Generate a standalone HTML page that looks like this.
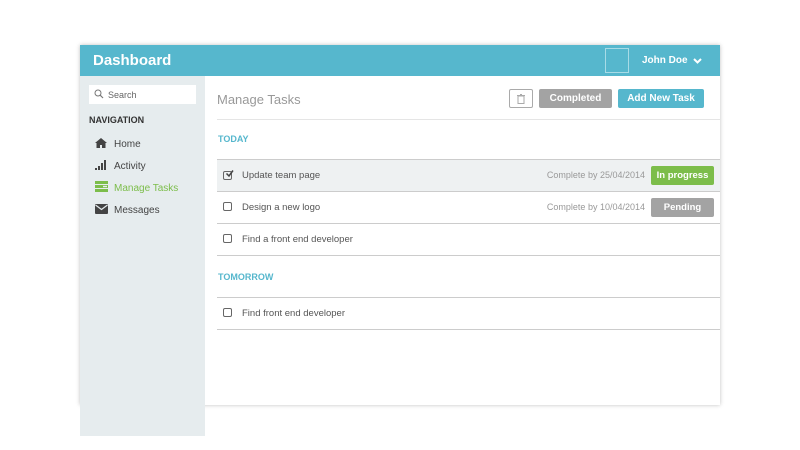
<!DOCTYPE html>
<html><head><meta charset="utf-8"><style>
*{margin:0;padding:0;box-sizing:border-box}
body{width:800px;height:450px;background:#fff;font-family:"Liberation Sans",sans-serif;position:relative;overflow:hidden}
.card{position:absolute;left:80px;top:45px;width:640px;height:360px;background:#fff;box-shadow:0 0 4px rgba(0,0,0,.25)}
.hdr{position:absolute;left:80px;top:45px;width:640px;height:31px;background:#56b7cd}
.hdr .t{position:absolute;left:13px;top:7px;color:#fff;font-weight:bold;font-size:15px}
.av{position:absolute;left:525px;top:3px;width:24px;height:25px;border:1px solid #8fcfdd}
.jd{position:absolute;left:562px;top:10px;color:#fff;font-size:10px;font-weight:bold}
.side{position:absolute;left:80px;top:76px;width:125px;height:360px;background:#e6ecee}
.search{position:absolute;left:9px;top:9px;width:107px;height:19px;background:#fff;font-size:9px;color:#666;padding:5px 0 0 19px}
.nav{position:absolute;left:9px;top:39px;font-size:9px;font-weight:bold;color:#333}
.ni{position:absolute;left:34px;font-size:10px;color:#444}
.ic{position:absolute;left:15px}
.mt{position:absolute;left:217px;top:92px;font-size:13px;color:#999}
.btn{position:absolute;top:89px;height:19px;font-size:10px;font-weight:bold;color:#fff;text-align:center;line-height:19px;border-radius:2px}
.line{position:absolute;left:217px;width:503px;height:1px;background:#ccc}
.sec{position:absolute;left:218px;font-size:9px;font-weight:bold;color:#56b7cd}
.row{position:absolute;left:242px;font-size:9.5px;color:#555}
.cb{position:absolute;left:223px;width:9px;height:9px;border:1px solid #666;border-radius:2px}
.date{position:absolute;right:155px;font-size:9px;color:#999;white-space:nowrap}
.badge{position:absolute;left:651px;width:63px;height:19px;line-height:19px;text-align:center;color:#fff;font-size:9.5px;font-weight:bold;border-radius:2px}
</style></head><body>
<div class="card"></div>
<div class="side">
 <div class="search">Search<svg style="position:absolute;left:5px;top:4px" width="10" height="10" viewBox="0 0 10 10"><circle cx="4" cy="4" r="3" fill="none" stroke="#777" stroke-width="1"/><path d="M6.2 6.2L9 9" stroke="#777" stroke-width="1.2"/></svg></div>
 <div class="nav">NAVIGATION</div>
</div>
<svg class="ic" style="left:95px;top:138px" width="12" height="10" viewBox="0 0 12 10"><path d="M6 0L0 5h1.5v5h3.5V7h2v3h3.5V5H12z" fill="#444"/></svg>
<div class="ni" style="left:114px;top:139px">Home</div>
<svg class="ic" style="left:95px;top:159px" width="13" height="11" viewBox="0 0 13 11"><rect x="0" y="9" width="2" height="2" fill="#444"/><rect x="3" y="7" width="2" height="4" fill="#444"/><rect x="6" y="4" width="2" height="7" fill="#444"/><rect x="9" y="1" width="2" height="10" fill="#444"/></svg>
<div class="ni" style="left:114px;top:161px">Activity</div>
<svg class="ic" style="left:95px;top:181px" width="13" height="11" viewBox="0 0 13 11"><rect x="0" y="0" width="13" height="3" fill="#7cbd4a"/><rect x="0" y="4" width="13" height="3" fill="#7cbd4a"/><rect x="0" y="8" width="13" height="3" fill="#7cbd4a"/><rect x="8" y="4.8" width="4" height="1.4" fill="#e6ecee"/></svg>
<div class="ni" style="left:114px;top:183px;color:#7cbd4a">Manage Tasks</div>
<svg class="ic" style="left:95px;top:204px" width="13" height="10" viewBox="0 0 13 10"><rect width="13" height="10" rx="1" fill="#444"/><path d="M0.5 1L6.5 5.5L12.5 1" stroke="#e6ecee" stroke-width="1.2" fill="none"/></svg>
<div class="ni" style="left:114px;top:205px">Messages</div>
<div class="hdr"><div class="t">Dashboard</div><div class="av" style="border-color:#a8dbe6"></div><div class="jd">John Doe</div>
<svg style="position:absolute;left:613px;top:13px" width="9" height="6" viewBox="0 0 9 6"><path d="M1 1l3.5 3.5L8 1" stroke="#fff" stroke-width="2" fill="none"/></svg></div>
<div class="mt">Manage Tasks</div>
<div class="btn" style="left:509px;width:24px;border:1px solid #aaa;background:#fff"><svg style="margin-top:4px" width="8" height="10" viewBox="0 0 8 10"><rect x="1" y="2" width="6" height="7.5" fill="none" stroke="#aaa"/><path d="M0 1.5h8M3 0.5h2" stroke="#aaa"/></svg></div>
<div class="btn" style="left:539px;width:73px;background:#a3a3a3">Completed</div>
<div class="btn" style="left:618px;width:86px;background:#56b7cd">Add New Task</div>
<div class="line" style="top:119px;background:#e5e5e5"></div>
<div class="sec" style="top:134px">TODAY</div>
<div style="position:absolute;left:217px;top:160px;width:503px;height:31px;background:#eef1f2"></div>
<div class="line" style="top:159px"></div>
<div class="line" style="top:191px"></div>
<div class="line" style="top:223px"></div>
<div class="line" style="top:255px"></div>
<div class="cb" style="top:171px"></div><svg style="position:absolute;left:225px;top:169px" width="10" height="9" viewBox="0 0 10 9"><path d="M1.5 4.5l2.5 2.5L8 1.5" stroke="#444" stroke-width="1.5" fill="none"/></svg>
<div class="row" style="top:170px">Update team page</div>
<div class="date" style="top:170px">Complete by 25/04/2014</div>
<div class="badge" style="top:166px;background:#7cbd4a">In progress</div>
<div class="cb" style="top:202px"></div>
<div class="row" style="top:202px">Design a new logo</div>
<div class="date" style="top:202px">Complete by 10/04/2014</div>
<div class="badge" style="top:198px;background:#a3a3a3">Pending</div>
<div class="cb" style="top:234px"></div>
<div class="row" style="top:234px">Find a front end developer</div>
<div class="sec" style="top:272px">TOMORROW</div>
<div class="line" style="top:297px"></div>
<div class="line" style="top:329px"></div>
<div class="cb" style="top:308px"></div>
<div class="row" style="top:308px">Find front end developer</div>
</body></html>
